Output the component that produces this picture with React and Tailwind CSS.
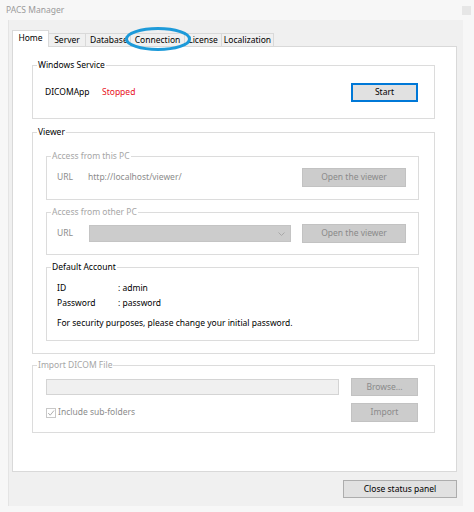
import React from 'react';

const font = { fontFamily: '"Noto Sans", "Open Sans", Arial, sans-serif' };

const Tab = ({ label, active, className }) => (
  <div
    className={
      active
        ? `relative z-10 -mb-px flex h-[17px] items-center justify-center border border-b-0 border-[#d9d9d9] bg-white pb-[1px] text-[8.5px] text-black ${className}`
        : `mt-[3px] flex h-[13px] items-center justify-center border border-b-0 border-l-0 border-[#d9d9d9] bg-[#f0f0f0] text-[8.5px] text-black ${className}`
    }
  >
    {label}
  </div>
);

// group box: legend stays at the left border, the padding goes on the body
const Group = ({ title, disabled, className, bodyClass, children }) => (
  <fieldset className={`border border-[#dcdcdc] ${className}`}>
    <legend className={`ml-[4px] px-[1px] text-[8.5px] leading-[10px] ${disabled ? 'text-[#a6a6a6]' : 'text-black'}`}>
      {title}
    </legend>
    <div className={bodyClass}>{children}</div>
  </fieldset>
);

const GrayButton = ({ children, className }) => (
  <div className={`flex items-center justify-center border border-[#c2c2c2] bg-[#cccccc] text-[8.5px] text-[#8a8a8a] ${className}`}>
    {children}
  </div>
);

export default function App() {
  return (
    <div className="relative h-[512px] w-[474px] overflow-hidden bg-[#f7f7f7]" style={font}>
      {/* title bar */}
      <div className="flex h-[20px] items-center justify-between pl-[6px] pr-[3px]">
        <span className="text-[8.5px] text-[#9a9a9a]">PACS Manager</span>
        <div className="h-[9px] w-[9px] bg-[#e6e6e6]" />
      </div>

      {/* window body */}
      <div className="ml-[8px] flex h-[486px] w-[455px] flex-col border-l border-[#e4e4e4] bg-[#f0f0f0] pl-[3px] pr-[6px] pt-[10px]">
        {/* tabs */}
        <div className="flex items-start">
          <Tab label="Home" active className="w-[37px]" />
          <Tab label="Server" className="w-[37px]" />
          <Tab label="Database" className="w-[45px] justify-start pl-[4px]" />
          <Tab label="Connection" className="w-[54px]" />
          <Tab label="License" className="w-[37px]" />
          <Tab label="Localization" className="w-[52px]" />
        </div>

        {/* tab panel */}
        <div className="flex h-[426px] flex-col border border-[#d9d9d9] bg-white pl-[19px] pr-[21px] pt-[13px]">
          <Group title="Windows Service" className="h-[59px]" bodyClass="flex items-center pl-[12px] pr-[16px] pt-[13px] text-[8.5px]">
            <span className="w-[57px] text-black">DICOMApp</span>
            <span className="text-[#e81123]">Stopped</span>
            <div className="ml-auto flex h-[19px] w-[67px] items-center justify-center border-2 border-[#0078d7] bg-[#e1e1e1] text-black">
              Start
            </div>
          </Group>

          <Group title="Viewer" className="mt-[8px] h-[227px]" bodyClass="pl-[13px] pr-[15px]">
            <Group
              title="Access from this PC"
              disabled
              className="mt-[14px] h-[49px]"
              bodyClass="flex items-center pl-[10px] pr-[12px] pt-[7px] text-[8.5px] text-[#8c8c8c]"
            >
              <span className="w-[31px]">URL</span>
              <span>http://localhost/viewer/</span>
              <GrayButton className="ml-auto h-[19px] w-[104px]">Open the viewer</GrayButton>
            </Group>

            <Group
              title="Access from other PC"
              disabled
              className="mt-[7px] h-[48px]"
              bodyClass="flex items-center pl-[10px] pr-[12px] pt-[7px] text-[8.5px] text-[#8c8c8c]"
            >
              <span className="w-[32px]">URL</span>
              <div className="flex h-[17px] w-[202px] items-center justify-end border border-[#c4c4c4] bg-[#cccccc] pr-[5px]">
                <svg width="7" height="4" viewBox="0 0 7 4">
                  <path d="M0.5 0.5 L3.5 3.5 L6.5 0.5" fill="none" stroke="#a8a8a8" strokeWidth="1" />
                </svg>
              </div>
              <GrayButton className="ml-auto h-[19px] w-[104px]">Open the viewer</GrayButton>
            </Group>

            <Group title="Default Account" className="mt-[7px] h-[79px]" bodyClass="pl-[10px] pt-[8px] text-[8.5px] leading-[15px] text-black">
              <div className="flex">
                <span className="w-[61px]">ID</span>
                <span>: admin</span>
              </div>
              <div className="flex">
                <span className="w-[61px]">Password</span>
                <span>: password</span>
              </div>
              <div className="mt-[5px]">For security purposes, please change your initial password.</div>
            </Group>
          </Group>

          <Group title="Import DICOM File" disabled className="mt-[6px] h-[73px]" bodyClass="pl-[13px] pr-[16px] pt-[8px]">
            <div className="flex items-center">
              <div className="h-[16px] w-[293px] border border-[#d4d4d4] bg-[#f0f0f0]" />
              <GrayButton className="ml-auto h-[18px] w-[67px]">Browse...</GrayButton>
            </div>
            <div className="mt-[7px] flex items-center">
              <div className="flex h-[10px] w-[10px] items-center justify-center border border-[#c8c8c8] bg-white">
                <svg width="8" height="8" viewBox="0 0 8 8">
                  <path d="M1.2 4 L3.2 6.2 L7 1.5" fill="none" stroke="#b0b0b0" strokeWidth="1" />
                </svg>
              </div>
              <span className="ml-[2px] text-[8.5px] text-[#8c8c8c]">Include sub-folders</span>
              <GrayButton className="ml-auto h-[19px] w-[67px]">Import</GrayButton>
            </div>
          </Group>
        </div>

        {/* bottom bar */}
        <div className="flex justify-end pt-[8px]">
          <div className="flex h-[18px] w-[114px] items-center justify-center border border-[#adadad] bg-[#e1e1e1] text-[8.5px] text-black">
            Close status panel
          </div>
        </div>
      </div>

      {/* annotation ellipse around the Connection tab */}
      <svg className="pointer-events-none absolute left-[123px] top-[25px]" width="70" height="28" viewBox="0 0 70 28">
        <ellipse cx="35" cy="14" rx="31.5" ry="10.5" fill="none" stroke="#1d9ad9" strokeWidth="3" />
      </svg>
    </div>
  );
}
